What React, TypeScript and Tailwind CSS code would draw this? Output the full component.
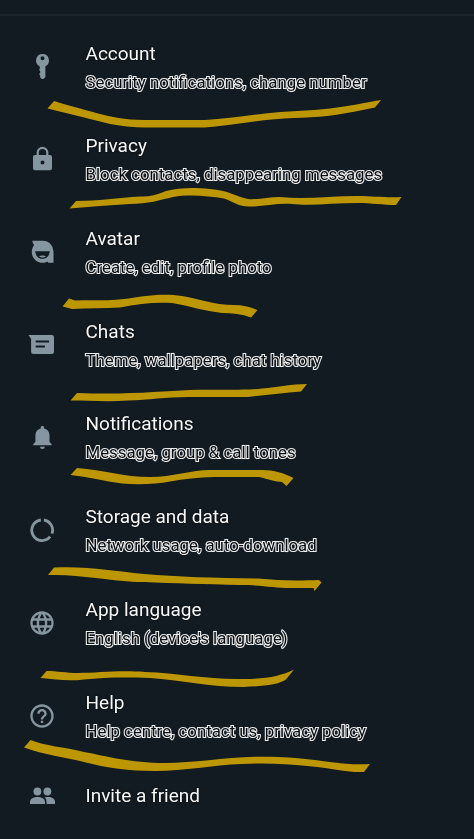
import React from 'react';
import { MdHelpOutline, MdLanguage } from 'react-icons/md';

interface SettingsItem {
  id: string;
  title: string;
  subtitle: string;
  icon: React.ReactNode;
}

const Glyph: React.FC<{ children: React.ReactNode }> = ({ children }) => (
  <svg viewBox="0 0 32 32" width={32} height={32} fill="currentColor">
    {children}
  </svg>
);

const ITEMS: SettingsItem[] = [
  {
    id: 'account',
    title: 'Account',
    subtitle: 'Security notifications, change number',
    icon: (
      <Glyph>
        <path
          fillRule="evenodd"
          d="M16.5 4a6.5 6.5 0 0 1 2.9 12.3V27l-2 2h-1.6l-1.6-1.6v-1.8l-.8-.8v-1.2l.8-.9v-1.5l-.8-.8v-1.2l.4-.8v-2A6.5 6.5 0 0 1 16.5 4Zm0 2.3a2 2 0 1 0 0 4 2 2 0 0 0 0-4Z"
        />
      </Glyph>
    ),
  },
  {
    id: 'privacy',
    title: 'Privacy',
    subtitle: 'Block contacts, disappearing messages',
    icon: (
      <Glyph>
        <path
          fillRule="evenodd"
          d="M9 12h1.6V9.6a5.9 5.9 0 0 1 11.8 0V12H24a2 2 0 0 1 2 2v11.2a2 2 0 0 1-2 2H9a2 2 0 0 1-2-2V14a2 2 0 0 1 2-2Zm3.8 0h7.4V9.6a3.7 3.7 0 0 0-7.4 0V12Zm3.7 5.6a2 2 0 1 0 0 4 2 2 0 0 0 0-4Z"
        />
      </Glyph>
    ),
  },
  {
    id: 'avatar',
    title: 'Avatar',
    subtitle: 'Create, edit, profile photo',
    icon: (
      <Glyph>
        <path
          fillRule="evenodd"
          d="M6.400 4.800H17A10.600 10.600 0 0 1 27.500 15.500v11.300h-5.200l-.7-1.300c-1.300.9-3 1.300-5 1.300A10.800 10.800 0 0 1 5.800 16c0-2.900.9-5.200 2.300-7.100C7.100 7.900 6.400 6.500 6.400 4.800ZM9.200 15.200c.4 4.500 3.300 7.600 7.300 7.600s6.900-3.100 7.300-7.600Z"
        />
        <path d="M12.900 20.500c2-1.400 5.200-1.400 7.200 0-2 1.300-5.200 1.300-7.200 0Z" />
      </Glyph>
    ),
  },
  {
    id: 'chats',
    title: 'Chats',
    subtitle: 'Theme, wallpapers, chat history',
    icon: (
      <Glyph>
        <path
          fillRule="evenodd"
          d="M2.500 7h23.300a2.200 2.200 0 0 1 2.200 2.200v14.600a2.200 2.200 0 0 1-2.200 2.200H7.300a2.200 2.200 0 0 1-2.200-2.200V11Zm7.200 5.600v2h13.400v-2Zm0 4.800v2h9.200v-2Z"
        />
      </Glyph>
    ),
  },
  {
    id: 'notifications',
    title: 'Notifications',
    subtitle: 'Message, group & call tones',
    icon: (
      <Glyph>
        <path d="M16.400 5c1 0 1.700.7 1.700 1.700v.8c3.600.8 5.400 3.700 5.400 7.200v6.200l2.100 2.100v1.200H7.300V23l2.100-2.100v-6.200c0-3.500 1.800-6.400 5.300-7.200v-.8c0-1 .7-1.700 1.700-1.700ZM14 25.700h4.800a2.400 2.400 0 0 1-4.800 0Z" />
      </Glyph>
    ),
  },
  {
    id: 'storage',
    title: 'Storage and data',
    subtitle: 'Network usage, auto-download',
    icon: (
      <Glyph>
        <g fill="none" stroke="currentColor" strokeWidth="2.8">
          <path d="M17.900 6A10.300 10.300 0 0 1 26 19.600" />
          <path d="M24.100 22.700A10.300 10.300 0 1 1 14.900 6" />
        </g>
      </Glyph>
    ),
  },
  {
    id: 'language',
    title: 'App language',
    subtitle: "English (device's language)",
    icon: <MdLanguage size={28} className="mt-px" />,
  },
  {
    id: 'help',
    title: 'Help',
    subtitle: 'Help centre, contact us, privacy policy',
    icon: <MdHelpOutline size={28} className="mt-px" />,
  },
];

// Marker strokes drawn across the whole screen
const MARKS = [
  'M54 101L47.500 108.500C62 112 78 116 92 119.500C108 124 124 127 144 127.500H205C225 126 245 122.500 266 120C290 117.500 315 118 335 115C349 113 362 110 375 107.500L381 100C364 103 350 106 330 108.500C310 111 285 111 265 113.500C244 116 224 119 205 120H144C124 120 112 117 98 113.500C82 109 66 105 54 101Z',
  'M76 201L69.500 208.500C90 207 110 205 130 204C148 204 160 200 173 197C190 194 208 196 224 198.500C234 202 238 206.500 249 206.500C262 207 275 203 292 204C310 206 335 203 357 203C372 203 383 205 396 205L401.500 197C386 198 374 196 357 196C330 196 305 200 280 197C268 197 258 200 248 199C237 197 228 190 210 189C192 187 178 188 166 191C156 195 148 197 140 196.500C118 198 98 201 76 201Z',
  'M69 298.500L62.500 306.500L72 309C88 308 104 308.500 120 307.500C138 304 154 302 172 303C190 306 204 311 222 313C232 313 242 314 251 317.500L257.500 310C250 307 243 305 234 305C214 305 196 298 182 296C160 292.500 140 297 124 299C108 301 91 300 75 300.500Z',
  'M77 393L70.500 400.500C88 400.500 108 402 128 400.500C148 400 166 397 188 397H248C266 395 284 393 301 391.500L307 384C292 384 278 387 262 388.500C240 391 215 389 190 390C162 391 130 395 77 393Z',
  'M77 468L70.500 475C88 477 104 481 122 483.500C140 485 156 484 170 481.500C184 479 198 477.500 214 477H259C268 479 276 482 282 482L286.500 486L293.500 478C284 473 274 470 262 470H210C192 470 172 477 150 477C124 477 104 470 77 468Z',
  'M54 567.500L48 575C66 574.500 80 576 96 578C114 580 128 582 144 582C175 583.500 205 584 240 585C262 585 274 588 290 588H313.500L314.500 591L321.500 582.500L319 580C295 581 278 580.500 258 578.500C215 578 178 577 144 574C112 571 90 566 54 567.500Z',
  'M46.500 671L40.500 678C56 679.500 68 681.500 84 679.500C104 677 130 677 150 678C180 680 210 687 244 687C264 686 278 685 286 679.500L294 669.500C281 676 266 679 244 679C208 680 180 673 145 672C118 670 98 673 78 673C66 673 57 671 46.500 671Z',
  'M30.500 740L24 747.500C44 755 65 757 84 762C106 768 130 771 155 771C185 771 212 765 242 764C284 762 318 767 345 771C352 772 357 772 364 772L370 764C342 766 315 758 278 757C234 755 200 763 165 763C130 763 106 756 84 752C64 747 45 746 30.500 740Z',
];

export default function App() {
  return (
    <div className="relative h-[839px] w-full overflow-hidden bg-[#121b22] font-['Roboto',sans-serif] text-[#8696a0] antialiased">
      <div className="h-[16px] border-b-2 border-[#1a242b]" />
      <ul className="pt-[4px] will-change-transform">
        {ITEMS.map(item => (
          <li key={item.id} className="flex h-[92.7px] items-center">
            <div className="ml-[26px] flex size-8 shrink-0 items-center justify-center">{item.icon}</div>
            <div className="ml-[27.500px] pt-[3.800px] whitespace-nowrap">
              <div className="text-[19px] leading-[28px] text-[#f8f9f9] [text-shadow:0_0_2px_#000]">{item.title}</div>
              <div className="text-[16.820px] leading-[29px] text-[#080c10] [-webkit-text-stroke:2.100px_#eff0f0] [paint-order:stroke_fill]">
                {item.subtitle}
              </div>
            </div>
          </li>
        ))}
        <li className="flex h-[32px] items-center mt-[18.400px]">
          <div className="ml-[26px] size-8 shrink-0">
            <Glyph>
              <circle cx="11.400" cy="11.500" r="3.900" />
              <circle cx="21.400" cy="11.500" r="3.900" />
              <path d="M4 24v-2.200c0-3.200 4-4.800 7.500-4.800s7.500 1.600 7.500 4.800V24Z" />
              <path d="M20 17.200c4.500-.8 9 .8 9 4.600V24h-8.500v-2.200c0-2-.6-3.500-2-4.600Z" />
            </Glyph>
          </div>
          <div className="ml-[27.500px] text-[19px] leading-[28px] text-[#f8f9f9] [text-shadow:0_0_2px_#000]">Invite a friend</div>
        </li>
      </ul>
      <svg className="pointer-events-none absolute inset-0" width={474} height={839} viewBox="0 0 474 839" fill="#bd9703">
        {MARKS.map((d, i) => (
          <path key={i} d={d} />
        ))}
      </svg>
    </div>
  );
}
